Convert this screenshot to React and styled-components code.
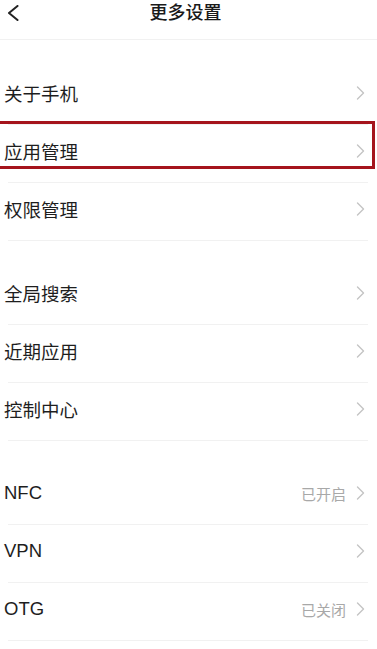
import React from 'react';
import styled, { createGlobalStyle } from 'styled-components';

const GlobalStyle = createGlobalStyle`
  html, body {
    margin: 0;
    padding: 0;
    background: #ffffff;
  }
  body {
    font-family: "Liberation Sans", "Noto Sans CJK SC", sans-serif;
    color: #1c1c1c;
  }
`;

const Page = styled.div`
  width: 377px;
  min-height: 649px;
  background: #ffffff;
  overflow: hidden;
`;

const Header = styled.div`
  height: 39px;
  border-bottom: 1px solid #f1f1f1;
  display: grid;
  grid-template-columns: 40px 1fr 40px;
  align-items: start;
`;

const BackButton = styled.div`
  display: flex;
  padding: 5px 0 0 7px;
`;

const Title = styled.div`
  text-align: center;
  font-size: 18px;
  line-height: 26px;
  font-weight: 500;
  color: #1a1a1a;
  margin-left: -6px;
`;

const Group = styled.div`
  display: flex;
  flex-direction: column;
  margin-top: ${({ $gap }) => $gap}px;
`;

const Row = styled.div`
  position: relative;
  height: 57px;
  box-sizing: border-box;
  display: flex;
  align-items: center;
  padding: 0 12px 5px 4px;
`;

const Label = styled.div`
  flex: 1;
  font-size: 18.5px;
  color: #1e1e1e;
`;

const Value = styled.div`
  font-size: 15px;
  color: #a8a8a8;
  margin-right: 10px;
`;

const Divider = styled.div`
  height: 1px;
  margin: 0 9px 0 8px;
  background: #f1f1f1;
`;

const Highlight = styled.div`
  position: absolute;
  top: -4px;
  left: -4px;
  right: 2px;
  height: 42px;
  border: 3px solid #a5141c;
  pointer-events: none;
`;

const Chevron = () => (
  <svg width="9" height="14" viewBox="0 0 9 14" fill="none">
    <path d="M1.5 1 L7.5 7 L1.5 13" stroke="#c4c4c4" strokeWidth="1.4" strokeLinecap="round" strokeLinejoin="round" />
  </svg>
);

const BackIcon = () => (
  <svg width="12" height="16" viewBox="0 0 12 16" fill="none">
    <path d="M10.5 1 L2 8 L10.5 15" stroke="#222" strokeWidth="2" strokeLinecap="round" strokeLinejoin="round" />
  </svg>
);

const GROUPS = [
  {
    gap: 27,
    items: [
      { label: '关于手机' },
      { label: '应用管理', highlight: true },
      { label: '权限管理' },
    ],
  },
  {
    gap: 26,
    items: [{ label: '全局搜索' }, { label: '近期应用' }, { label: '控制中心' }],
  },
  {
    gap: 26,
    items: [
      { label: 'NFC', value: '已开启' },
      { label: 'VPN' },
      { label: 'OTG', value: '已关闭' },
    ],
  },
];

export default function App() {
  return (
    <Page>
      <GlobalStyle />
      <Header>
        <BackButton>
          <BackIcon />
        </BackButton>
        <Title>更多设置</Title>
        <div />
      </Header>
      {GROUPS.map((group, gi) => (
        <Group key={gi} $gap={group.gap}>
          {group.items.map((item) => (
            <React.Fragment key={item.label}>
              <Row>
                <Label>{item.label}</Label>
                {item.value && <Value>{item.value}</Value>}
                <Chevron />
                {item.highlight && <Highlight />}
              </Row>
              <Divider />
            </React.Fragment>
          ))}
        </Group>
      ))}
    </Page>
  );
}
